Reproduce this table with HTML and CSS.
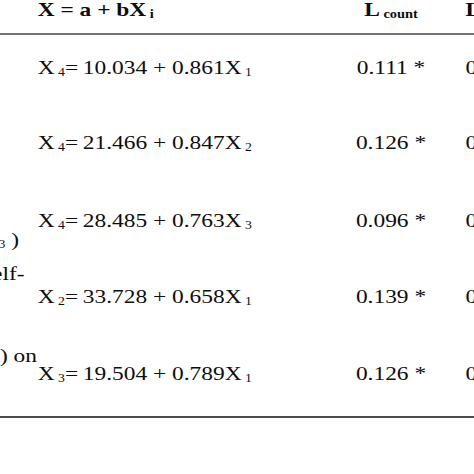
FILE: index.html
```html
<!DOCTYPE html>
<html lang="en">
<head>
<meta charset="utf-8">
<title>Regression table</title>
<link rel="stylesheet" href="styles.css">
</head>
<body>
<div class="sheet">
  <div class="head">
    <div class="cell c-desc"></div>
    <div class="cell c-eq">X = a + bX<sub> i</sub></div>
    <div class="cell c-l">L<sub> count</sub></div>
    <div class="cell c-r">L<sub> table</sub></div>
  </div>
  <div class="row">
    <div class="cell c-desc"></div>
    <div class="cell c-eq">X<sub> 4</sub>=&#8201;10.034 + 0.861X<sub> 1</sub></div>
    <div class="cell c-l">0.111 *</div>
    <div class="cell c-r">0.190</div>
  </div>
  <div class="row">
    <div class="cell c-desc"></div>
    <div class="cell c-eq">X<sub> 4</sub>=&#8201;21.466 + 0.847X<sub> 2</sub></div>
    <div class="cell c-l">0.126 *</div>
    <div class="cell c-r">0.190</div>
  </div>
  <div class="row">
    <div class="cell c-desc"><div class="frag frag-a"><span class="frag-text"><sub>3</sub>&nbsp;)</span></div></div>
    <div class="cell c-eq">X<sub> 4</sub>=&#8201;28.485 + 0.763X<sub> 3</sub></div>
    <div class="cell c-l">0.096 *</div>
    <div class="cell c-r">0.190</div>
  </div>
  <div class="row">
    <div class="cell c-desc"><div class="frag frag-b"><span class="frag-text">self-</span></div></div>
    <div class="cell c-eq">X<sub> 2</sub>=&#8201;33.728 + 0.658X<sub> 1</sub></div>
    <div class="cell c-l">0.139 *</div>
    <div class="cell c-r">0.190</div>
  </div>
  <div class="row">
    <div class="cell c-desc"><div class="frag frag-c"><span class="frag-text">)&nbsp;on</span></div></div>
    <div class="cell c-eq">X<sub> 3</sub>=&#8201;19.504 + 0.789X<sub> 1</sub></div>
    <div class="cell c-l">0.126 *</div>
    <div class="cell c-r">0.190</div>
  </div>
</div>
</body>
</html>
```
FILE: styles.css
```css
html, body {
  margin: 0;
  padding: 0;
  background: #ffffff;
  overflow: hidden;
}

.sheet {
  width: 395px;
  height: 474px;
  overflow: hidden;
  transform: scaleX(1.2);
  transform-origin: 0 0;
  font-family: "Liberation Serif", "Times New Roman", serif;
  font-size: 19.5px;
  line-height: 18px;
  color: #0d0d0d;
}

.head,
.row {
  display: grid;
  grid-template-columns: 30.8px 248.4px 93.3px 1fr;
  box-sizing: border-box;
}

.head {
  height: 35px;
  padding-top: 1px;
  font-weight: bold;
  border-bottom: 2px solid #747474;
}

.head sub {
  font-size: 12px;
  vertical-align: -2px;
}

.row {
  padding-top: 24px;
}

.row:nth-child(2) { height: 75px; }
.row:nth-child(3) { height: 78px; }
.row:nth-child(4) { height: 76px; }
.row:nth-child(5) { height: 77px; }
.row:nth-child(6) {
  height: 77px;
  border-bottom: 2px solid #4c4c4c;
}

.cell {
  white-space: nowrap;
}

sub {
  font-size: 11.5px;
  line-height: 0;
  vertical-align: -2px;
}

.c-eq {
  padding-left: 0.6px;
}

.c-l {
  text-align: center;
}

.c-r {
  padding-left: 15.5px;
}

.c-desc {
  min-width: 0;
}

.frag {
  display: flex;
  justify-content: flex-end;
}

.frag-text {
  flex: none;
}

.frag-a {
  margin-top: 19px;
  padding-right: 15px;
}

.frag-b {
  margin-top: -23px;
  padding-right: 10.4px;
}

.frag-c {
  margin-top: -18px;
  padding-right: 0;
}
```
